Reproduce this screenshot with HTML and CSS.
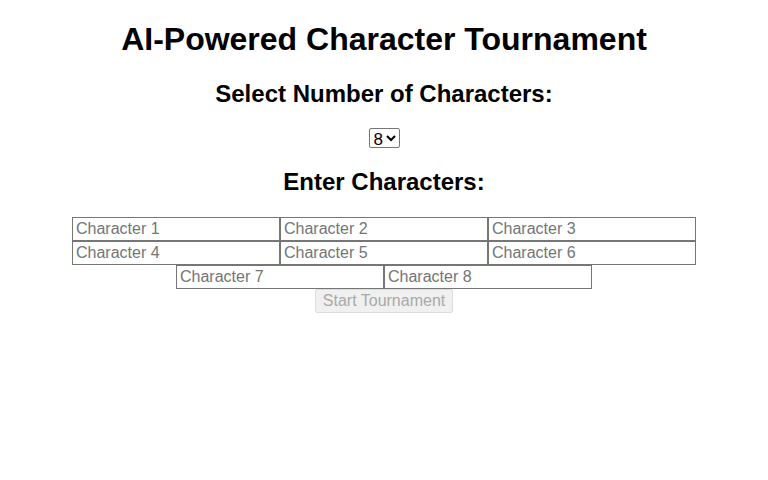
FILE: index.html
```html
<!DOCTYPE html>
<html>
<head>
<meta charset="utf-8">
<link rel="stylesheet" href="styles.css">
</head>
<body>
<div class="app">
  <h1>AI-Powered Character Tournament</h1>
  <h2>Select Number of Characters:</h2>
  <div class="select-row">
    <select class="count">
      <option>2</option>
      <option>4</option>
      <option selected>8</option>
      <option>16</option>
    </select>
  </div>
  <h2>Enter Characters:</h2>
  <div class="inputs">
    <input class="char" type="text" placeholder="Character 1">
    <input class="char" type="text" placeholder="Character 2">
    <input class="char" type="text" placeholder="Character 3">
    <input class="char" type="text" placeholder="Character 4">
    <input class="char" type="text" placeholder="Character 5">
    <input class="char" type="text" placeholder="Character 6">
    <input class="char" type="text" placeholder="Character 7">
    <input class="char" type="text" placeholder="Character 8">
  </div>
  <div class="actions">
    <button class="start" disabled>Start Tournament</button>
  </div>
</div>
</body>
</html>
```
FILE: styles.css
```css
html, body {
  background: #ffffff;
}
body {
  margin: 0;
  padding: 8px;
  font-family: "Liberation Sans", Arial, sans-serif;
  color: #000;
}
.app {
  text-align: center;
}
h1 {
  font-size: 32px;
  margin: 13px 0 22px;
  line-height: 37px;
}
h2 {
  font-size: 24px;
  margin: 20px 0;
  line-height: 28px;
}
.select-row {
  height: 20px;
  display: flex;
  justify-content: center;
}
.count {
  font-family: "Liberation Sans", Arial, sans-serif;
  font-size: 17px;
  height: 20px;
  width: 31px;
  padding: 0;
  box-sizing: border-box;
  border: 1px solid #767676;
  border-radius: 2px;
  background: #fff;
  color: #000;
}
.inputs {
  display: flex;
  flex-wrap: wrap;
  justify-content: center;
  max-width: 640px;
  margin: 21px auto 0;
}
.char {
  box-sizing: border-box;
  width: 208px;
  height: 24px;
  margin: 0;
  padding: 1px 3px;
  border: 1px solid #767676;
  border-radius: 0;
  font-family: "Liberation Sans", Arial, sans-serif;
  font-size: 16px;
  color: #000;
  background: #fff;
}
.char::placeholder {
  color: #757575;
}
.actions {
  display: flex;
  justify-content: center;
}
.start {
  box-sizing: border-box;
  width: 138px;
  height: 24px;
  margin: 0;
  padding: 1px 6px;
  font-family: "Liberation Sans", Arial, sans-serif;
  font-size: 16px;
  color: #a9a9a9;
  background: #f0f0f0;
  border: 1px solid #dcdcdc;
  border-radius: 2px;
}
```
